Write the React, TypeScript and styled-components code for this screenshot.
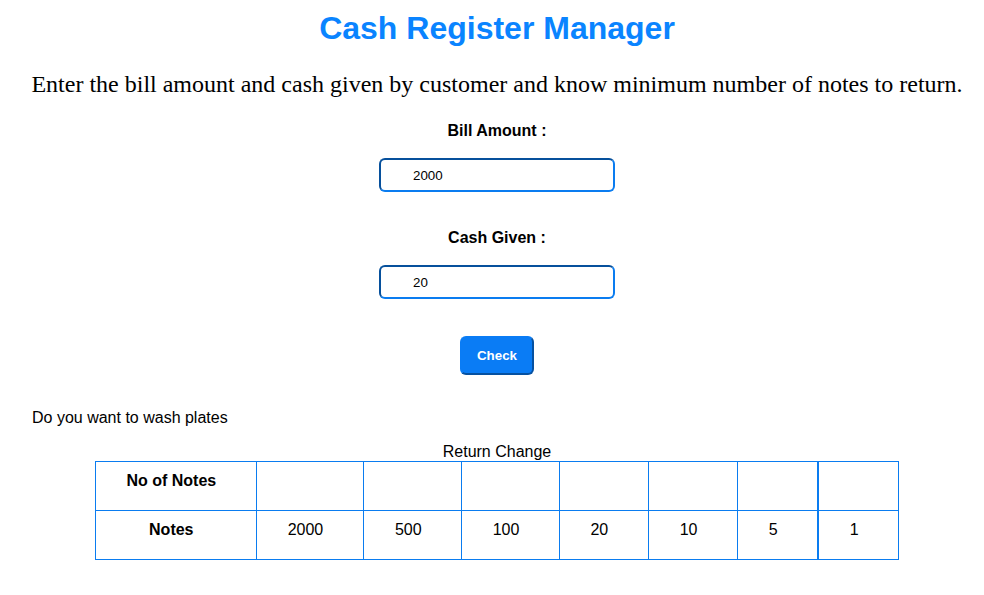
import { createGlobalStyle, styled } from "styled-components";

const GlobalStyle = createGlobalStyle`
    body {
        margin: 8px;
        background: #ffffff;
        font-family: "Liberation Serif", "Times New Roman", serif;
    }
`

const Page = styled.div`
    display: flex;
    flex-direction: column;
    align-items: center;
    padding-left: 10px;
`

const Title = styled.h1`
    margin: 2px 0 0;
    font-family: "Liberation Sans", Arial, sans-serif;
    font-size: 32px;
    font-weight: bold;
    color: #0a84ff;
`

const Intro = styled.p`
    margin: 24px 0 0;
    font-size: 24px;
    text-align: center;
`

const Form = styled.div`
    display: flex;
    flex-direction: column;
    align-items: center;
    font-family: "Liberation Sans", Arial, sans-serif;
`

const Label = styled.label`
    margin-top: 24px;
    font-size: 16px;
    font-weight: bold;
    color: #000;
`

const Input = styled.input`
    box-sizing: border-box;
    margin-top: 18px;
    width: 236px;
    height: 34px;
    padding: 0 0 0 32px;
    border: 2px inset #0a7cf0;
    border-radius: 6px;
    font-family: "Liberation Sans", Arial, sans-serif;
    font-size: 13.33px;
    color: #000;
    outline: none;
    & + label {
        margin-top: 37px;
    }
`

const CheckButton = styled.button`
    box-sizing: border-box;
    margin-top: 37px;
    width: 74px;
    height: 39px;
    background: #0a7cf5;
    border: 2px outset #0a7cf5;
    border-radius: 6px;
    color: #fff;
    font-family: "Liberation Sans", Arial, sans-serif;
    font-size: 13.33px;
    font-weight: bold;
    cursor: pointer;
`

const Question = styled.p`
    align-self: flex-start;
    margin: 34px 0 0 14px;
    font-family: "Liberation Sans", Arial, sans-serif;
    font-size: 16px;
    color: #000;
`

const ChangeTable = styled.table`
    margin-top: 16px;
    width: 804px;
    border-collapse: collapse;
    font-family: "Liberation Sans", Arial, sans-serif;
    font-size: 16px;
    color: #000;

    caption {
        font-size: 16px;
        line-height: 18px;
    }
`

const Cell = styled.td<{ $w?: number; $thick?: boolean }>`
    height: 38px;
    ${p => (p.$w ? `width: ${p.$w}px;` : "")}
    border: 1px solid #0a7cf0;
    ${p => (p.$thick ? "border-left-width: 2px;" : "")}
    text-align: center;
    padding: 0 9px 10px 0;
`

const HeadCell = styled.th`
    width: 151px;
    height: 38px;
    border: 1px solid #0a7cf0;
    padding: 0 9px 10px 0;
    font-weight: bold;
`

const notes = [2000, 500, 100, 20, 10, 5, 1]
const widths = [98, 88, 88, 79, 80, 70, 70]

export default function App() {
    return (
        <>
            <GlobalStyle />
            <Page>
                <Title>Cash Register Manager</Title>
                <Intro>
                    Enter the bill amount and cash given by customer and know minimum number of notes to return.
                </Intro>
                <Form>
                    <Label htmlFor="bill">Bill Amount :</Label>
                    <Input id="bill" type="number" defaultValue="2000" />
                    <Label htmlFor="cash">Cash Given :</Label>
                    <Input id="cash" type="number" defaultValue="20" />
                    <CheckButton>Check</CheckButton>
                </Form>
                <Question>Do you want to wash plates</Question>
                <ChangeTable>
                    <caption>Return Change</caption>
                    <tbody>
                        <tr>
                            <HeadCell>No of Notes</HeadCell>
                            {notes.map((n, i) => (
                                <Cell key={n} $w={widths[i]} $thick={i === 6} />
                            ))}
                        </tr>
                        <tr>
                            <HeadCell>Notes</HeadCell>
                            {notes.map((n, i) => (
                                <Cell key={n} $thick={i === 6}>{n}</Cell>
                            ))}
                        </tr>
                    </tbody>
                </ChangeTable>
            </Page>
        </>
    )
}
